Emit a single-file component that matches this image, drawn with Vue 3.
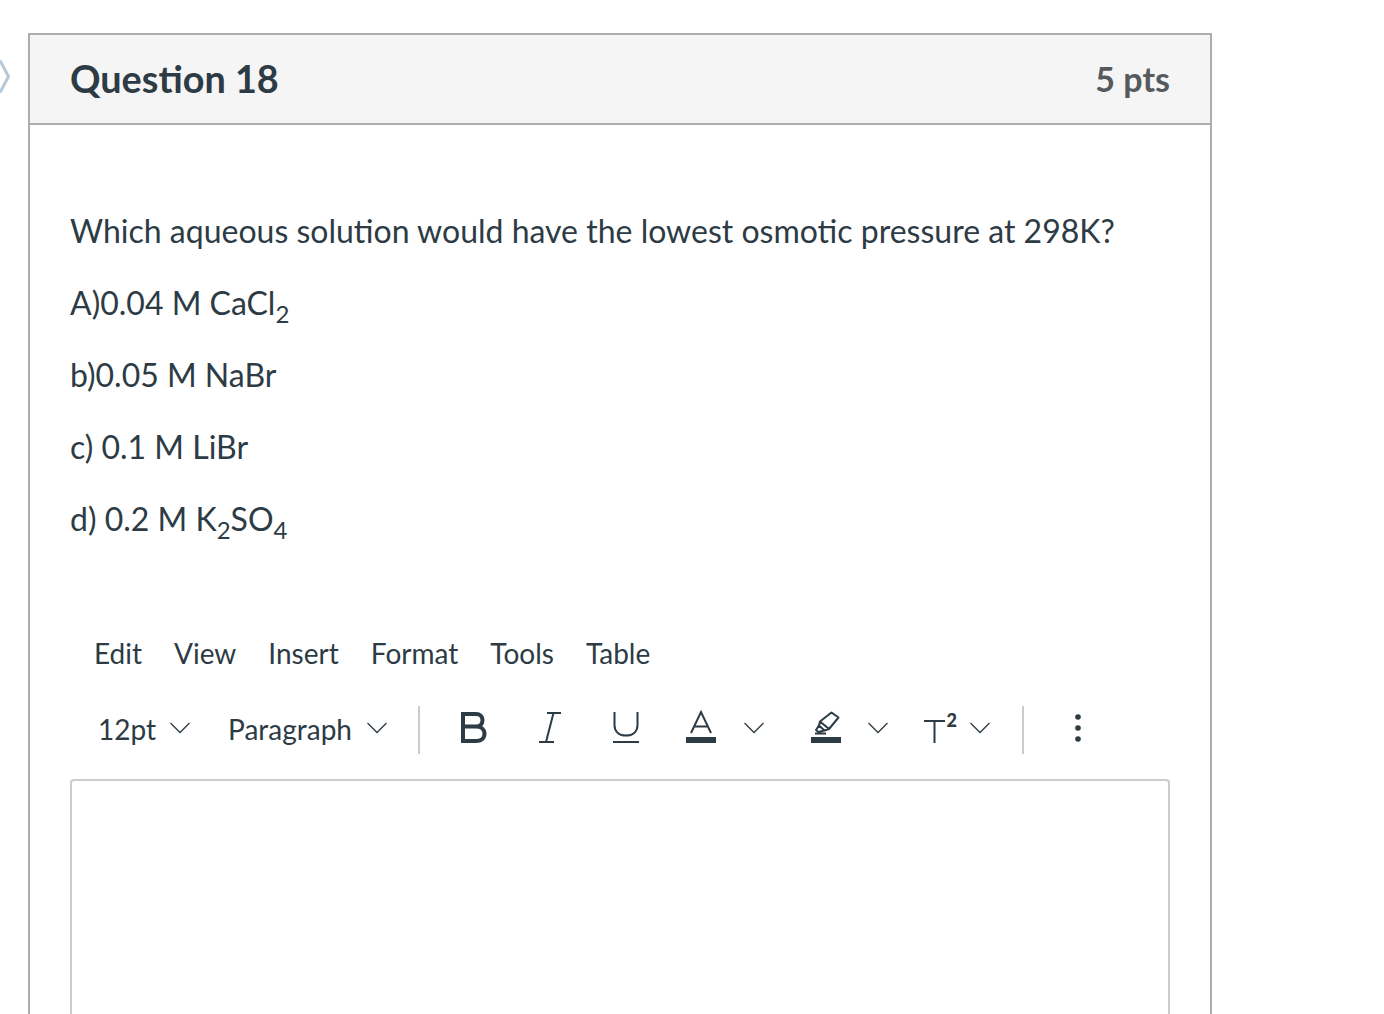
<template>
  <div class="page">
    <svg class="marker" width="12" height="40" viewBox="0 0 12 40">
      <path d="M0 2.500 L8.500 18.500 L0 34.500" fill="#fff" stroke="#b5c9d8" stroke-width="3" />
    </svg>
    <div class="card">
      <div class="card-head">
        <div class="title">Question 18</div>
        <div class="pts">5 pts</div>
      </div>
      <div class="card-body">
        <p class="first">Which aqueous solution would have the lowest osmotic pressure at 298K?</p>
        <p>A)0.04 M CaCl<sub>2</sub></p>
        <p>b)0.05 M NaBr</p>
        <p>c) 0.1 M LiBr</p>
        <p>d) 0.2 M K<sub>2</sub>SO<sub>4</sub></p>

        <div class="menubar">
          <span v-for="item in menu" :key="item">{{ item }}</span>
        </div>

        <div class="toolbar">
          <span class="select size">12pt</span>
          <svg class="chev c-size" width="20" height="50" viewBox="0 0 20 50"><path d="M.5 18l9.500 9.500 9.500-9.500" /></svg>
          <span class="select para">Paragraph</span>
          <svg class="chev c-para" width="20" height="50" viewBox="0 0 20 50"><path d="M.5 18l9.500 9.500 9.500-9.500" /></svg>
          <div class="sep first-sep"></div>

          <svg class="ico bold" width="26" height="50" viewBox="0 0 26 50">
            <path d="M2 9h13c4 0 6.500 2.500 6.500 6.300S19 21.500 15 21.500H2M15 21.500c5 0 8.500 2.800 8.500 7.300S20 36 15 36H2V7" />
          </svg>
          <svg class="ico italic" width="22" height="50" viewBox="0 0 22 50">
            <path d="M8 8h14M0 37h15M14.500 8L7 37" />
          </svg>
          <svg class="ico under" width="26" height="50" viewBox="0 0 26 50">
            <path d="M1.500 7v13c0 7 5 10.500 11.500 10.500S24.500 27 24.500 20V7M0 37h26" />
          </svg>
          <svg class="ico color" width="30" height="50" viewBox="0 0 30 50">
            <path d="M5 28L15 7l10 21M8 21.500h14" />
            <rect y="32" width="30" height="6" />
          </svg>
          <svg class="chev c-color" width="20" height="50" viewBox="0 0 20 50"><path d="M.5 18l9.500 9.500 9.500-9.500" /></svg>
          <svg class="ico mark" width="30" height="50" viewBox="0 0 30 50">
            <path d="M20.500 7.500L27.500 12.500 18 24l-4.500 1.500L8 20.500l1-4zM9 16.500l9 7.500M8 20.500L5 25l2.500 2 6-1.500M4 28.500h11" stroke-linejoin="round" />
            <rect y="32" width="30" height="6" />
          </svg>
          <svg class="chev c-mark" width="20" height="50" viewBox="0 0 20 50"><path d="M.5 18l9.500 9.500 9.500-9.500" /></svg>
          <svg class="ico sup" width="33" height="50" viewBox="0 0 33 50">
            <path d="M0 16h21M10.500 16v22" />
            <text x="22.500" y="22">2</text>
          </svg>
          <svg class="chev c-sup" width="20" height="50" viewBox="0 0 20 50"><path d="M.5 18l9.500 9.500 9.500-9.500" /></svg>
          <div class="sep last-sep"></div>
          <svg class="ico dots" width="8" height="50" viewBox="0 0 8 50">
            <circle cx="4" cy="12" r="2.800" />
            <circle cx="4" cy="23" r="2.800" />
            <circle cx="4" cy="34" r="2.800" />
          </svg>
        </div>

        <div class="editor"></div>
      </div>
    </div>
  </div>
</template>

<script setup>
const menu = ['Edit', 'View', 'Insert', 'Format', 'Tools', 'Table']
</script>

<style>
html, body {
  overflow: hidden;
  background: #fff;
}
</style>

<style scoped>
.page {
  position: relative;
  height: 1014px;
  overflow: hidden;
  padding: 33px 0 0 28px;
  box-sizing: border-box;
  font-family: Lato, "Open Sans", sans-serif;
  color: #2d3b45;
}
.marker {
  position: absolute;
  left: 0;
  top: 58px;
}
.card {
  width: 1184px;
  box-sizing: border-box;
  border: 2px solid #aaaeb1;
  border-bottom: 0;
  height: 1100px;
}
.card-head {
  height: 90px;
  box-sizing: border-box;
  background: #f5f5f5;
  border-bottom: 2px solid #aaaeb1;
  display: flex;
  align-items: center;
  justify-content: space-between;
  padding: 0 40px 2px;
}
.title {
  font-size: 37.800px;
  font-weight: 700;
}
.pts {
  font-size: 34px;
  font-weight: 700;
  color: #565a5c;
}
.card-body {
  padding: 0 40px;
}
p {
  margin: 0;
  font-size: 32px;
  line-height: 48px;
  height: 48px;
  margin-bottom: 24px;
}
p.first {
  margin-top: 82px;
}
sub {
  font-size: 24px;
  line-height: 0;
  vertical-align: -8px;
}
.menubar {
  display: flex;
  gap: 32px;
  margin-top: 90px;
  padding-left: 24px;
  font-size: 28px;
  line-height: 40px;
  height: 40px;
}
.toolbar {
  display: flex;
  align-items: center;
  height: 50px;
  margin-top: 32px;
  padding-left: 28px;
}
.select {
  font-size: 28px;
  line-height: 48px;
  height: 50px;
}
.chev,
.ico {
  flex: none;
}
.chev path,
.ico path {
  fill: none;
  stroke: #2d3b45;
  stroke-width: 2;
}
.chev path {
  stroke-width: 1.300;
}
.bold path {
  stroke-width: 4;
}
.ico rect,
.ico circle,
.ico text {
  fill: #2d3b45;
}
.ico text {
  font-size: 18px;
  font-weight: 900;
}
.c-size {
  margin-left: 14px;
}
.para {
  margin-left: 38px;
}
.c-para {
  margin-left: 15px;
}
.sep {
  width: 2px;
  height: 48px;
  background: #c7cdd1;
  flex: none;
}
.first-sep {
  margin-left: 31px;
}
.bold {
  margin-left: 41px;
}
.italic {
  margin-left: 52px;
}
.under {
  margin-left: 52px;
}
.color {
  margin-left: 47px;
}
.c-color {
  margin-left: 28px;
}
.mark {
  margin-left: 47px;
}
.c-mark {
  margin-left: 27px;
}
.sup {
  margin-left: 36px;
}
.c-sup {
  margin-left: 13px;
}
.last-sep {
  margin-left: 32px;
}
.dots {
  margin-left: 50px;
}
.editor {
  margin-top: 24px;
  height: 400px;
  border: 2px solid #c7cdd1;
  border-radius: 4px;
}
</style>
